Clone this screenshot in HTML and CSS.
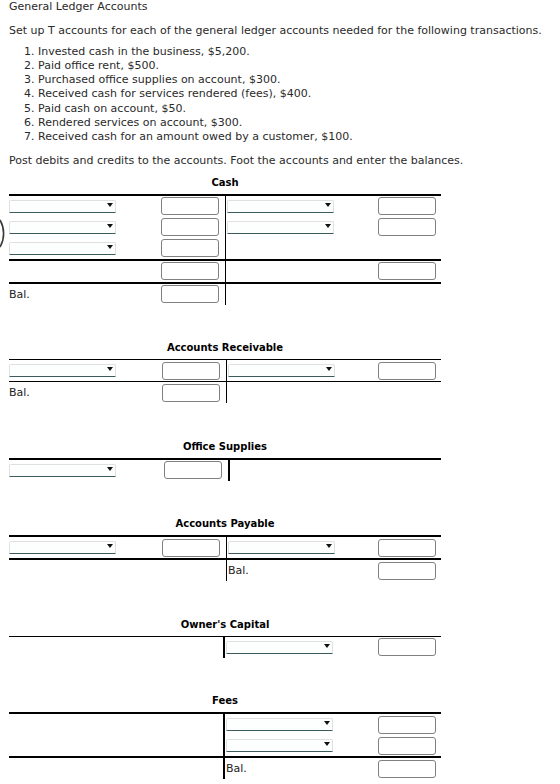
FILE: index.html
```html
<!DOCTYPE html>
<html lang="en">
<head>
<meta charset="utf-8">
<title>General Ledger Accounts</title>
<link rel="stylesheet" href="styles.css">
</head>
<body>
<div class="page">
  <svg class="edge-arc" width="8" height="30" viewBox="0 0 8 30" aria-hidden="true">
    <path d="M0 1 A 27 27 0 0 1 0 28" fill="none" stroke="#3a3a3a" stroke-width="1.6"/>
  </svg>

  <h1 class="heading">General Ledger Accounts</h1>
  <p class="intro">Set up T accounts for each of the general ledger accounts needed for the following transactions.</p>
  <ol class="steps">
    <li>Invested cash in the business, $5,200.</li>
    <li>Paid office rent, $500.</li>
    <li>Purchased office supplies on account, $300.</li>
    <li>Received cash for services rendered (fees), $400.</li>
    <li>Paid cash on account, $50.</li>
    <li>Rendered services on account, $300.</li>
    <li>Received cash for an amount owed by a customer, $100.</li>
  </ol>
  <p class="post">Post debits and credits to the accounts. Foot the accounts and enter the balances.</p>

  <section class="tacct cash">
    <div class="tname">Cash</div>
    <div class="tsec">
      <div class="side left">
        <div class="row"><span class="dd"></span><span class="amt"></span></div>
        <div class="row"><span class="dd"></span><span class="amt"></span></div>
        <div class="row"><span class="dd"></span><span class="amt"></span></div>
      </div>
      <div class="side right">
        <div class="row"><span class="dd"></span><span class="amt"></span></div>
        <div class="row"><span class="dd"></span><span class="amt"></span></div>
      </div>
    </div>
    <div class="tsec">
      <div class="side left"><div class="row end"><span class="amt"></span></div></div>
      <div class="side right"><div class="row end"><span class="amt"></span></div></div>
    </div>
    <div class="tsec">
      <div class="side left"><div class="row"><span class="bal">Bal.</span><span class="amt"></span></div></div>
      <div class="side right"></div>
    </div>
  </section>

  <section class="tacct ar">
    <div class="tname">Accounts Receivable</div>
    <div class="tsec">
      <div class="side left"><div class="row"><span class="dd"></span><span class="amt"></span></div></div>
      <div class="side right"><div class="row"><span class="dd"></span><span class="amt"></span></div></div>
    </div>
    <div class="tsec">
      <div class="side left"><div class="row"><span class="bal">Bal.</span><span class="amt"></span></div></div>
      <div class="side right"></div>
    </div>
  </section>

  <section class="tacct os">
    <div class="tname">Office Supplies</div>
    <div class="tsec">
      <div class="side left"><div class="row"><span class="dd"></span><span class="amt"></span></div></div>
      <div class="side right"></div>
    </div>
  </section>

  <section class="tacct ap">
    <div class="tname">Accounts Payable</div>
    <div class="tsec">
      <div class="side left"><div class="row"><span class="dd"></span><span class="amt"></span></div></div>
      <div class="side right"><div class="row"><span class="dd"></span><span class="amt"></span></div></div>
    </div>
    <div class="tsec">
      <div class="side left"></div>
      <div class="side right"><div class="row"><span class="bal">Bal.</span><span class="amt"></span></div></div>
    </div>
  </section>

  <section class="tacct oc">
    <div class="tname">Owner's Capital</div>
    <div class="tsec">
      <div class="side left"></div>
      <div class="side right"><div class="row"><span class="dd"></span><span class="amt"></span></div></div>
    </div>
  </section>

  <section class="tacct fees">
    <div class="tname">Fees</div>
    <div class="tsec">
      <div class="side left"></div>
      <div class="side right">
        <div class="row"><span class="dd"></span><span class="amt"></span></div>
        <div class="row"><span class="dd"></span><span class="amt"></span></div>
      </div>
    </div>
    <div class="tsec">
      <div class="side left"></div>
      <div class="side right"><div class="row"><span class="bal">Bal.</span><span class="amt"></span></div></div>
    </div>
  </section>
</div>
</body>
</html>
```

FILE: styles.css
```css
html, body {
  margin: 0;
  padding: 0;
  background: #ffffff;
}

body {
  font-family: "DejaVu Sans", Verdana, sans-serif;
  font-size: 11px;
  color: #2a2a2a;
}

.page {
  position: relative;
  padding-left: 9px;
  width: 432px;
}

.edge-arc {
  position: absolute;
  left: 0;
  top: 219px;
}

.heading {
  margin: 0;
  font-size: 11px;
  font-weight: normal;
  line-height: 13px;
}

.intro {
  margin: 11px 0 0;
  line-height: 13px;
  white-space: nowrap;
}

.steps {
  margin: 7.5px 0 0;
  padding-left: 29px;
}

.steps li {
  line-height: 14.3px;
}

.post {
  margin: 9.6px 0 0;
  line-height: 13px;
  white-space: nowrap;
}

.tacct {
  --lw: 217px;
  --vw: 1px;
  --hw: 2px;
  width: 432px;
  margin-top: 36.5px;
}

.cash { margin-top: 8.6px; }
.ar   { --lw: 218px; --hw: 1px; }
.os   { --lw: 221px; --vw: 2px; }
.ap   { --lw: 218px; }
.oc   { --lw: 216px; --vw: 2px; --hw: 1px; }
.fees { --lw: 216px; --vw: 2px; }

.tname {
  text-align: center;
  font-weight: bold;
  font-size: 10px;
  line-height: 13px;
  color: #000;
  margin-bottom: 5px;
}

.tsec {
  display: grid;
  grid-template-columns: var(--lw) 1fr;
  border-top: var(--hw) solid #000;
}

.side.left {
  border-right: var(--vw) solid #000;
  padding-right: 6px;
}

.side.right {
  padding-left: 1px;
  padding-right: 5px;
}

.row {
  height: 21px;
  display: flex;
  align-items: center;
  justify-content: space-between;
}

.row.end {
  justify-content: flex-end;
}

.bal {
  color: #222;
  line-height: 13px;
}

.dd {
  box-sizing: border-box;
  width: 107px;
  height: 13px;
  border: 1px solid #e0e0e0;
  border-bottom: 1px solid #3b5b5e;
  border-radius: 2px 2px 0 0;
  background: #fdfefe;
  display: flex;
  justify-content: flex-end;
  align-items: flex-start;
  padding: 2px 2px 0 0;
}

.dd::after {
  content: "";
  width: 0;
  height: 0;
  border-left: 3px solid transparent;
  border-right: 3px solid transparent;
  border-top: 4px solid #111;
}

.amt {
  display: block;
  box-sizing: border-box;
  width: 58px;
  height: 18px;
  border: 1px solid #808080;
  border-radius: 3px;
  background: #fff;
}
```
